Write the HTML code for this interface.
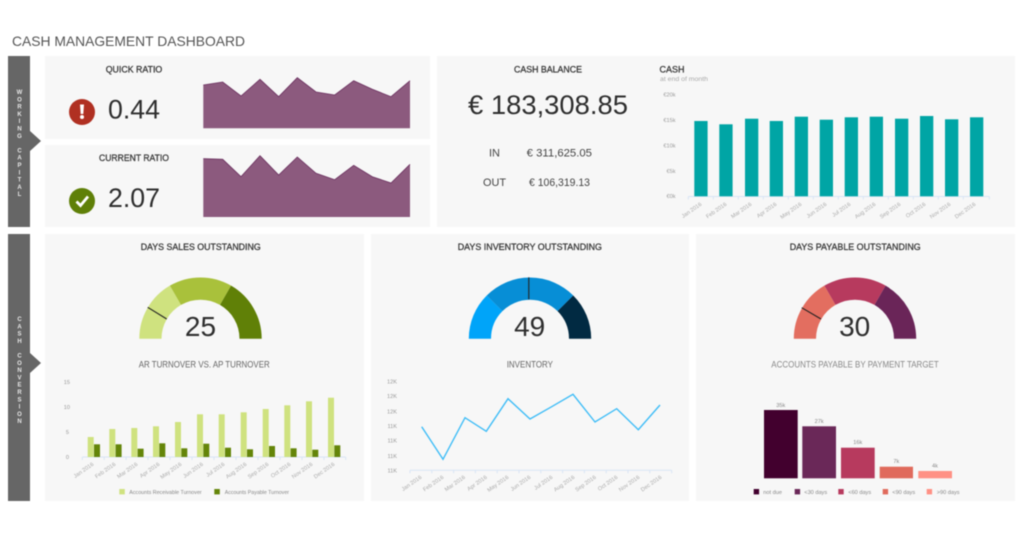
<!DOCTYPE html>
<html><head><meta charset="utf-8"><title>Cash Management Dashboard</title>
<style>
html,body{margin:0;padding:0;background:#fff;width:1024px;height:538px;overflow:hidden}
svg{display:block;filter:blur(.45px);font-family:"Liberation Sans",sans-serif}
.t{font-size:9.5px;fill:#3a3a3a;stroke:#3a3a3a;stroke-width:.3;text-anchor:start}
.s{font-size:9.5px;fill:#666}
.n{fill:#2e2e2e;text-anchor:middle}
.m text{font-size:5.6px;fill:#aaa;text-anchor:end}
.y text{font-size:5.6px;fill:#999;text-anchor:end}
.l text{font-size:5.6px;fill:#888}
.g{fill:none;stroke-width:22.2}
.v{font-size:6px;font-weight:bold;fill:#e8e8e8;text-anchor:middle}
.ax{stroke:#d9e5f5;stroke-width:1;fill:none}
</style></head>
<body>
<svg width="1024" height="538" viewBox="0 0 1024 538" xmlns="http://www.w3.org/2000/svg">
<rect width="1024" height="538" fill="#fff"/>
<text x="12" y="46" font-size="14" fill="#555" textLength="233" lengthAdjust="spacingAndGlyphs">CASH MANAGEMENT DASHBOARD</text>

<!-- sidebars -->
<path d="M8 56H30V131L41 141L30 151V227H8Z" fill="#666"/>
<path d="M8 234H30V353L41 363L30 373V501H8Z" fill="#666"/>
<text class="v" x="19.5 19.5 19.5 19.5 19.5 19.5 19.5 19.5 19.5 19.5 19.5 19.5 19.5 19.5 19.5" y="94 101.3 108.6 115.9 123.2 130.5 137.8 145.1 152.4 159.7 167 174.3 181.6 188.9 196.2">WORKING&#160;CAPITAL</text>
<text class="v" x="19.5 19.5 19.5 19.5 19.5 19.5 19.5 19.5 19.5 19.5 19.5 19.5 19.5 19.5 19.5" y="321 328.3 335.6 342.9 350.2 357.5 364.8 372.1 379.4 386.7 394 401.3 408.6 415.9 423.2">CASH&#160;CONVERSION</text>

<!-- panels -->
<g fill="#f7f7f7">
<rect x="45" y="56" width="385" height="83"/>
<rect x="45" y="145" width="385" height="82"/>
<rect x="437" y="56" width="578" height="171"/>
<rect x="45" y="234" width="319" height="267"/>
<rect x="371" y="234" width="318" height="267"/>
<rect x="696" y="234" width="319" height="267"/>
</g>

<!-- quick ratio -->
<text class="t" x="105.7" y="72.5" textLength="56.6" lengthAdjust="spacingAndGlyphs">QUICK RATIO</text>
<circle cx="82" cy="112" r="13" fill="#b03022"/>
<path d="M80 104.5h4l-.7 9.5h-2.600z" fill="#fff"/>
<circle cx="82" cy="117" r="2" fill="#fff"/>
<text x="134" y="118.500" font-size="26.500" class="n" textLength="52" lengthAdjust="spacingAndGlyphs">0.44</text>
<path d="M203.300 85L222.700 82L241 96L260 79.300L278.700 96.700L297.300 77.700L316 92L334.700 95L353.700 80.700L372.300 89.300L391 96.700L410 80.700V128.300H203.300Z" fill="#8c5a7e"/>
<path d="M203.300 85L222.700 82L241 96L260 79.300L278.700 96.700L297.300 77.700L316 92L334.700 95L353.700 80.700L372.300 89.300L391 96.700L410 80.700" fill="none" stroke="#6a2e5e" stroke-width=".8"/>

<!-- current ratio -->
<text class="t" x="99" y="161" textLength="70" lengthAdjust="spacingAndGlyphs">CURRENT RATIO</text>
<circle cx="82" cy="201" r="13" fill="#5f8008"/>
<path d="M76.500 201.500L80.500 205.500L88 196.500" fill="none" stroke="#fff" stroke-width="2.800"/>
<text x="134" y="206.800" font-size="26.500" class="n" textLength="52" lengthAdjust="spacingAndGlyphs">2.07</text>
<path d="M203.300 158.700L222.700 159.300L241 176.700L260 155.700L278.700 175L297.300 157L316 173.300L334.700 179.700L353.700 165.300L372.300 176.700L391 183L410 164.300V217H203.300Z" fill="#8c5a7e"/>
<path d="M203.300 158.700L222.700 159.300L241 176.700L260 155.700L278.700 175L297.300 157L316 173.300L334.700 179.700L353.700 165.300L372.300 176.700L391 183L410 164.300" fill="none" stroke="#6a2e5e" stroke-width=".8"/>

<!-- cash balance -->
<text class="t" x="514" y="72.700" textLength="68" lengthAdjust="spacingAndGlyphs">CASH BALANCE</text>
<text x="468" y="114" font-size="27" fill="#2e2e2e" textLength="160" lengthAdjust="spacingAndGlyphs">€ 183,308.85</text>
<text x="489" y="156.700" font-size="11" fill="#444" textLength="11" lengthAdjust="spacingAndGlyphs">IN</text>
<text x="526.700" y="156.700" font-size="11" fill="#444" textLength="65.300" lengthAdjust="spacingAndGlyphs">€ 311,625.05</text>
<text x="483" y="186" font-size="11" fill="#444" textLength="23" lengthAdjust="spacingAndGlyphs">OUT</text>
<text x="529" y="186" font-size="11" fill="#444" textLength="61" lengthAdjust="spacingAndGlyphs">€ 106,319.13</text>

<!-- cash chart -->
<text class="t" x="659.500" y="72.500" textLength="25" lengthAdjust="spacingAndGlyphs">CASH</text>
<text x="660" y="81" font-size="6.500" fill="#aaa" textLength="48" lengthAdjust="spacingAndGlyphs">at end of month</text>
<g class="y">
<text x="675.500" y="96.700">€20k</text><text x="675.500" y="122">€15k</text><text x="675.500" y="147.700">€10k</text><text x="675.500" y="173">€5k</text><text x="675.500" y="198">€0k</text>
</g>
<path class="ax" d="M688.300 196.500H989.300M688.300 196.500v3M713.300 196.500v3M738.300 196.500v3M763.300 196.500v3M788.300 196.500v3M813.300 196.500v3M838.300 196.500v3M863.300 196.500v3M888.300 196.500v3M913.300 196.500v3M938.300 196.500v3M963.300 196.500v3M989.300 196.500v3"/>
<g fill="#00a5a5">
<rect x="694.300" y="121" width="13.300" height="75.300"/>
<rect x="719.300" y="124.300" width="13.300" height="72"/>
<rect x="745" y="118.700" width="13.300" height="77.600"/>
<rect x="769.700" y="121" width="13.300" height="75.300"/>
<rect x="794.700" y="116.700" width="13.300" height="79.600"/>
<rect x="819.700" y="119.700" width="13.300" height="76.600"/>
<rect x="844.700" y="117.300" width="13.300" height="79"/>
<rect x="869.700" y="116.700" width="13.300" height="79.600"/>
<rect x="895" y="118.700" width="13.300" height="77.600"/>
<rect x="920" y="116" width="13.300" height="80.300"/>
<rect x="945" y="119.300" width="13.300" height="77"/>
<rect x="970" y="117.300" width="13.300" height="79"/>
</g>
<g class="m">
<text transform="translate(702,205) rotate(-35)">Jan 2016</text>
<text transform="translate(727,205) rotate(-35)">Feb 2016</text>
<text transform="translate(752,205) rotate(-35)">Mar 2016</text>
<text transform="translate(777,205) rotate(-35)">Apr 2016</text>
<text transform="translate(802,205) rotate(-35)">May 2016</text>
<text transform="translate(827,205) rotate(-35)">Jun 2016</text>
<text transform="translate(851,205) rotate(-35)">Jul 2016</text>
<text transform="translate(876,205) rotate(-35)">Aug 2016</text>
<text transform="translate(901,205) rotate(-35)">Sep 2016</text>
<text transform="translate(926,205) rotate(-35)">Oct 2016</text>
<text transform="translate(951,205) rotate(-35)">Nov 2016</text>
<text transform="translate(976,205) rotate(-35)">Dec 2016</text>
</g>

<!-- gauges -->
<text class="t" x="140.700" y="250" textLength="120" lengthAdjust="spacingAndGlyphs">DAYS SALES OUTSTANDING</text>
<path class="g" stroke="#cfe27f" d="M150.400 338.700A50.100 50.100 0 0 1 175.450 295.300"/>
<path class="g" stroke="#a9c13b" d="M175.450 295.300A50.100 50.100 0 0 1 225.550 295.300"/>
<path class="g" stroke="#608007" d="M225.550 295.300A50.100 50.100 0 0 1 250.600 338.700"/>
<path d="M147.700 307.300L166.700 319" stroke="#222" stroke-width="1.100"/>
<text x="200.500" y="336" font-size="28" class="n">25</text>

<text class="t" x="457.700" y="250" textLength="144.300" lengthAdjust="spacingAndGlyphs">DAYS INVENTORY OUTSTANDING</text>
<path class="g" stroke="#00a4f9" d="M479.900 338.700A50.100 50.100 0 0 1 494.600 303.300"/>
<path class="g" stroke="#078ed6" d="M494.600 303.300A50.100 50.100 0 0 1 565.400 303.300"/>
<path class="g" stroke="#012a42" d="M565.400 303.300A50.100 50.100 0 0 1 580.100 338.700"/>
<path d="M528.800 277.300V299.300" stroke="#222" stroke-width="1.100"/>
<text x="529.700" y="336" font-size="28" class="n">49</text>

<text class="t" x="789.700" y="250" textLength="131" lengthAdjust="spacingAndGlyphs">DAYS PAYABLE OUTSTANDING</text>
<path class="g" stroke="#e36e60" d="M804.900 338.700A50.100 50.100 0 0 1 829.950 295.300"/>
<path class="g" stroke="#b73a5e" d="M829.950 295.300A50.100 50.100 0 0 1 880.050 295.300"/>
<path class="g" stroke="#6a2558" d="M880.050 295.300A50.100 50.100 0 0 1 905.100 338.700"/>
<path d="M801.700 307.700L821 319" stroke="#222" stroke-width="1.100"/>
<text x="854.700" y="336" font-size="28" class="n">30</text>

<!-- AR chart -->
<text class="s" x="138.700" y="367.700" textLength="131" lengthAdjust="spacingAndGlyphs">AR TURNOVER VS. AP TURNOVER</text>
<g class="y" style="text-anchor:middle">
<text x="70" y="384">15</text><text x="70" y="409">10</text><text x="69" y="434">5</text><text x="69" y="459">0</text>
</g>
<path class="ax" d="M82.300 457H345.700M82.300 457v3M104.200 457v3M126.100 457v3M148 457v3M170 457v3M192 457v3M214 457v3M236 457v3M258 457v3M280 457v3M302 457v3M324 457v3M345.700 457v3"/>
<g fill="#cfe27f">
<rect x="87.700" y="437" width="6" height="20"/>
<rect x="109.300" y="429" width="6" height="28"/>
<rect x="131.300" y="428" width="6" height="29"/>
<rect x="153" y="426.300" width="6" height="30.700"/>
<rect x="175" y="422" width="6" height="35"/>
<rect x="197" y="414.300" width="6" height="42.700"/>
<rect x="218.700" y="414.300" width="6" height="42.700"/>
<rect x="240.700" y="412.300" width="6" height="44.700"/>
<rect x="262.700" y="409" width="6" height="48"/>
<rect x="284.300" y="405.300" width="6" height="51.700"/>
<rect x="306" y="401.300" width="6" height="55.700"/>
<rect x="328" y="397.700" width="6" height="59.300"/>
</g>
<g fill="#648509">
<rect x="94" y="444.300" width="6" height="12.700"/>
<rect x="115.600" y="444.300" width="6" height="12.700"/>
<rect x="137.600" y="448.700" width="6" height="8.300"/>
<rect x="159.300" y="443.300" width="6" height="13.700"/>
<rect x="181.300" y="448.300" width="6" height="8.700"/>
<rect x="203.300" y="443.700" width="6" height="13.300"/>
<rect x="225" y="447.700" width="6" height="9.300"/>
<rect x="247" y="449.300" width="6" height="7.700"/>
<rect x="269" y="446" width="6" height="11"/>
<rect x="290.600" y="448.300" width="6" height="8.700"/>
<rect x="312.300" y="449.700" width="6" height="7.300"/>
<rect x="334.300" y="445.300" width="6" height="11.700"/>
</g>
<g class="m">
<text transform="translate(94,465) rotate(-35)">Jan 2016</text>
<text transform="translate(116,465) rotate(-35)">Feb 2016</text>
<text transform="translate(138,465) rotate(-35)">Mar 2016</text>
<text transform="translate(160,465) rotate(-35)">Apr 2016</text>
<text transform="translate(182,465) rotate(-35)">May 2016</text>
<text transform="translate(203.500,465) rotate(-35)">Jun 2016</text>
<text transform="translate(225,465) rotate(-35)">Jul 2016</text>
<text transform="translate(247,465) rotate(-35)">Aug 2016</text>
<text transform="translate(269,465) rotate(-35)">Sep 2016</text>
<text transform="translate(291,465) rotate(-35)">Oct 2016</text>
<text transform="translate(313,465) rotate(-35)">Nov 2016</text>
<text transform="translate(335,465) rotate(-35)">Dec 2016</text>
</g>
<rect x="119.300" y="489" width="5.500" height="5.400" fill="#cfe27f"/>
<rect x="214.300" y="489" width="5.500" height="5.400" fill="#648509"/>
<g class="l">
<text x="129.300" y="494" textLength="72.400" lengthAdjust="spacingAndGlyphs">Accounts Receivable Turnover</text>
<text x="224.700" y="494" textLength="64.300" lengthAdjust="spacingAndGlyphs">Accounts Payable Turnover</text>
</g>

<!-- inventory chart -->
<text class="s" x="506.700" y="367.700" textLength="46.300" lengthAdjust="spacingAndGlyphs">INVENTORY</text>
<g class="y">
<text x="397" y="383.300">12K</text><text x="397" y="398">12K</text><text x="397" y="413.300">12K</text><text x="397" y="428">11K</text><text x="397" y="442.700">11K</text><text x="397" y="458">11K</text><text x="397" y="472.300">11K</text>
</g>
<path class="ax" d="M410 470.300H671.700M410 470.300v3M431.800 470.300v3M453.600 470.300v3M475.400 470.300v3M497.200 470.300v3M519 470.300v3M540.800 470.300v3M562.600 470.300v3M584.400 470.300v3M606.200 470.300v3M628 470.300v3M649.800 470.300v3M671.700 470.300v3"/>
<path d="M421.700 426.700L443 459.300L465 417.700L486.300 431.300L508 398.700L530 419L551.700 406.700L573 394.300L595 422L616.700 408.700L638.300 429.700L660 405" fill="none" stroke="#3fbdf7" stroke-width="1.400"/>
<g class="m">
<text transform="translate(422,478) rotate(-35)">Jan 2016</text>
<text transform="translate(444,478) rotate(-35)">Feb 2016</text>
<text transform="translate(465.600,478) rotate(-35)">Mar 2016</text>
<text transform="translate(487.400,478) rotate(-35)">Apr 2016</text>
<text transform="translate(509,478) rotate(-35)">May 2016</text>
<text transform="translate(531,478) rotate(-35)">Jun 2016</text>
<text transform="translate(553,478) rotate(-35)">Jul 2016</text>
<text transform="translate(575,478) rotate(-35)">Aug 2016</text>
<text transform="translate(596.400,478) rotate(-35)">Sep 2016</text>
<text transform="translate(618,478) rotate(-35)">Oct 2016</text>
<text transform="translate(640,478) rotate(-35)">Nov 2016</text>
<text transform="translate(662,478) rotate(-35)">Dec 2016</text>
</g>

<!-- payable chart -->
<text class="s" x="771.300" y="367.700" textLength="167.400" lengthAdjust="spacingAndGlyphs" style="fill:#888">ACCOUNTS PAYABLE BY PAYMENT TARGET</text>
<rect x="764" y="410" width="33.700" height="68.300" fill="#42002e"/>
<rect x="802.300" y="426.300" width="33.700" height="52" fill="#6a2858"/>
<rect x="841" y="447.700" width="33.700" height="30.600" fill="#b73a5e"/>
<rect x="879.700" y="466.700" width="33.300" height="11.600" fill="#e06a5c"/>
<rect x="918.300" y="471" width="33.700" height="7.300" fill="#ff9185"/>
<g font-size="5.600" fill="#888" text-anchor="middle">
<text x="780.800" y="407">35k</text><text x="819.200" y="423">27k</text><text x="857.800" y="444">16k</text><text x="896.300" y="463">7k</text><text x="935" y="467.500">4k</text>
</g>
<rect x="753.700" y="489" width="5.400" height="5.400" fill="#42002e"/>
<rect x="794.700" y="489" width="5.400" height="5.400" fill="#6a2858"/>
<rect x="838.300" y="489" width="5.400" height="5.400" fill="#b73a5e"/>
<rect x="882.700" y="489" width="5.400" height="5.400" fill="#e06a5c"/>
<rect x="926.700" y="489" width="5.400" height="5.400" fill="#ff9185"/>
<g class="l">
<text x="763.300" y="494">not due</text><text x="804.300" y="494">&lt;30 days</text><text x="848.300" y="494">&lt;60 days</text><text x="892.300" y="494">&lt;90 days</text><text x="936.700" y="494">&gt;90 days</text>
</g>
</svg>
</body></html>
